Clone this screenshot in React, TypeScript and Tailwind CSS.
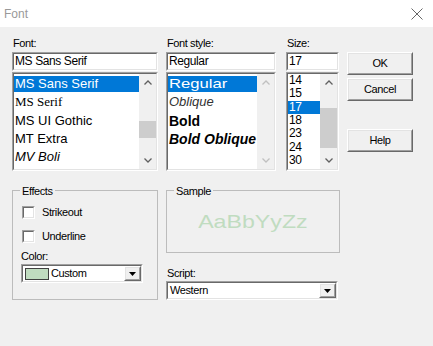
import React from "react";

function Sunken({ className = "", children }: { className?: string; children?: React.ReactNode }) {
  return (
    <div className={`border border-t-[#a0a0a0] border-l-[#a0a0a0] border-r-white border-b-white ${className}`}>
      <div className="h-full w-full border border-t-[#696969] border-l-[#696969] border-r-[#e3e3e3] border-b-[#e3e3e3] bg-white overflow-hidden">
        {children}
      </div>
    </div>
  );
}

function Raised({ className = "", children }: { className?: string; children?: React.ReactNode }) {
  return (
    <div className={`border border-t-white border-l-white border-r-[#696969] border-b-[#696969] ${className}`}>
      <div className="h-full w-full border border-t-[#e3e3e3] border-l-[#e3e3e3] border-r-[#a0a0a0] border-b-[#a0a0a0] bg-[#f0f0f0] flex items-center justify-center">
        {children}
      </div>
    </div>
  );
}

function Chevron({ up, color }: { up?: boolean; color: string }) {
  return (
    <svg width="8" height="5" viewBox="0 0 8 5">
      <path
        d={up ? "M0.5 4.5 L4 1 L7.5 4.5" : "M0.5 0.5 L4 4 L7.5 0.5"}
        fill="none"
        stroke={color}
        strokeWidth="1.3"
      />
    </svg>
  );
}

function ScrollBar({ thumb, disabled }: { thumb?: React.ReactNode; disabled?: boolean }) {
  const c = disabled ? "#c0c0c0" : "#606060";
  return (
    <div className="w-[17px] h-full bg-[#f0f0f0] flex flex-col shrink-0">
      <div className="h-[17px] flex items-center justify-center">
        <Chevron up color={c} />
      </div>
      <div className="flex-1 flex flex-col">{thumb}</div>
      <div className="h-[17px] flex items-center justify-center">
        <Chevron color={c} />
      </div>
    </div>
  );
}

function DropButton() {
  return (
    <Raised className="w-[17px] h-full shrink-0">
      <svg width="7" height="4" viewBox="0 0 7 4">
        <path d="M0 0 L7 0 L3.5 4 Z" fill="#000" />
      </svg>
    </Raised>
  );
}

function CheckBox({ label }: { label: string }) {
  return (
    <div className="flex items-center h-[13px] ml-[1px]">
      <Sunken className="w-[13px] h-[13px]" />
      <span className="ml-[7px] leading-[13px]">{label}</span>
    </div>
  );
}

function GroupBox({ label, className = "", children }: { label: string; className?: string; children?: React.ReactNode }) {
  return (
    <div className={`relative border border-[#bcbcbc] ${className}`}>
      <span className="absolute -top-[7px] left-[7px] px-[2px] bg-[#f0f0f0] leading-[15px]">{label}</span>
      {children}
    </div>
  );
}

const row = "h-[16px] mb-[2.3px] leading-[16px] pl-[1px] whitespace-nowrap text-[13px] tracking-normal";

export default function App() {
  return (
    <div className="w-[433px] h-[346px] bg-[#f0f0f0] overflow-hidden text-[11px] tracking-[-0.4px] text-black font-['Liberation_Sans',Arial,sans-serif]">
      {/* Title bar */}
      <div className="h-[27px] bg-white flex items-center justify-between pl-[4px] pr-[10px]">
        <span className="text-[12px] tracking-normal text-[#999999]">Font</span>
        <svg width="12" height="12" viewBox="0 0 12 12" className="mt-[1px]">
          <path d="M0.5 0.5 L11.5 11.5 M11.5 0.5 L0.5 11.5" stroke="#666" strokeWidth="1" />
        </svg>
      </div>

      {/* Top section */}
      <div className="flex pl-[12px] pt-[8px]">
        {/* Font column */}
        <div className="w-[146px] flex flex-col">
          <div className="h-[17px] leading-[16px] pl-[1px]">Font:</div>
          <Sunken className="h-[19px]">
            <div className="pl-[1px] leading-[15px] text-[12px]">MS Sans Serif</div>
          </Sunken>
          <Sunken className="h-[99px] mt-[1px]">
            <div className="flex h-full">
              <div className="flex-1 pt-[2px] overflow-hidden">
                <div className={`${row} bg-[#0078d7] text-white`}>MS Sans Serif</div>
                <div className={`${row} font-['Liberation_Serif',serif]`}>MS Serif</div>
                <div className={row}>MS UI Gothic</div>
                <div className={row}>MT Extra</div>
                <div className={`${row} italic`}>MV Boli</div>
              </div>
              <ScrollBar thumb={<><div className="h-[30px]" /><div className="h-[17px] bg-[#cdcdcd]" /></>} />
            </div>
          </Sunken>
        </div>

        {/* Font style column */}
        <div className="w-[110px] ml-[8px] flex flex-col">
          <div className="h-[17px] leading-[16px] pl-[1px]">Font style:</div>
          <Sunken className="h-[19px]">
            <div className="pl-[1px] leading-[15px] text-[12px]">Regular</div>
          </Sunken>
          <Sunken className="h-[99px] mt-[1px]">
            <div className="flex h-full">
              <div className="flex-1 pt-[2px] overflow-hidden">
                <div className={`${row} bg-[#0078d7] text-white`}>
                  <span className="inline-block origin-left scale-x-[1.28]">Regular</span>
                </div>
                <div className={`${row} italic text-[#333]`}>Oblique</div>
                <div className={`${row} font-bold text-[14px]`}>Bold</div>
                <div className={`${row} font-bold italic text-[14px] tracking-[-0.2px]`}>Bold Oblique</div>
              </div>
              <ScrollBar disabled />
            </div>
          </Sunken>
        </div>

        {/* Size column */}
        <div className="w-[53px] ml-[10px] flex flex-col">
          <div className="h-[17px] leading-[16px] pl-[1px]">Size:</div>
          <Sunken className="h-[19px]">
            <div className="pl-[1px] leading-[15px] text-[12px]">17</div>
          </Sunken>
          <Sunken className="h-[99px] mt-[1px]">
            <div className="flex h-full">
              <div className="flex-1 overflow-hidden">
                {["14", "15", "17", "18", "23", "24", "30"].map((s) => (
                  <div
                    key={s}
                    className={`h-[13.33px] leading-[13.33px] pl-[1px] text-[12px] ${s === "17" ? "bg-[#0078d7] text-white" : ""}`}
                  >
                    {s}
                  </div>
                ))}
              </div>
              <ScrollBar thumb={<><div className="h-[17px]" /><div className="h-[40px] bg-[#cdcdcd]" /></>} />
            </div>
          </Sunken>
        </div>

        {/* Buttons */}
        <div className="w-[66px] ml-[8px] pt-[17px] flex flex-col">
          <Raised className="h-[23px]">OK</Raised>
          <Raised className="h-[23px] mt-[3px]">Cancel</Raised>
          <Raised className="h-[23px] mt-[28px]">Help</Raised>
        </div>
      </div>

      {/* Bottom section */}
      <div className="flex pl-[12px] mt-[19px]">
        <GroupBox label="Effects" className="w-[146px] h-[110px]">
          <div className="pl-[8px] pt-[15px] flex flex-col">
            <CheckBox label="Strikeout" />
            <div className="h-[11px]" />
            <CheckBox label="Underline" />
            <div className="h-[5px]" />
            <div className="h-[16px] leading-[16px]">Color:</div>
            <Sunken className="w-[122px] h-[19px]">
              <div className="flex h-full items-center">
                <div className="ml-[2px] w-[24px] h-[12px] bg-[#c0dcc0] border border-[#404040]" />
                <span className="ml-[2px] flex-1 leading-[15px]">Custom</span>
                <DropButton />
              </div>
            </Sunken>
          </div>
        </GroupBox>

        <div className="w-[174px] ml-[8px] flex flex-col">
          <GroupBox label="Sample" className="h-[63px]">
            <div className="pt-[20px] text-center leading-[22px]">
              <span className="inline-block scale-x-[1.22] text-[19px] tracking-normal text-[#c0dcc0]">AaBbYyZz</span>
            </div>
          </GroupBox>
          <div className="mt-[13px] h-[15px] leading-[15px] pl-[1px]">Script:</div>
          <Sunken className="w-[172px] h-[19px]">
            <div className="flex h-full items-center">
              <span className="pl-[2px] flex-1 leading-[15px]">Western</span>
              <DropButton />
            </div>
          </Sunken>
        </div>
      </div>
    </div>
  );
}
